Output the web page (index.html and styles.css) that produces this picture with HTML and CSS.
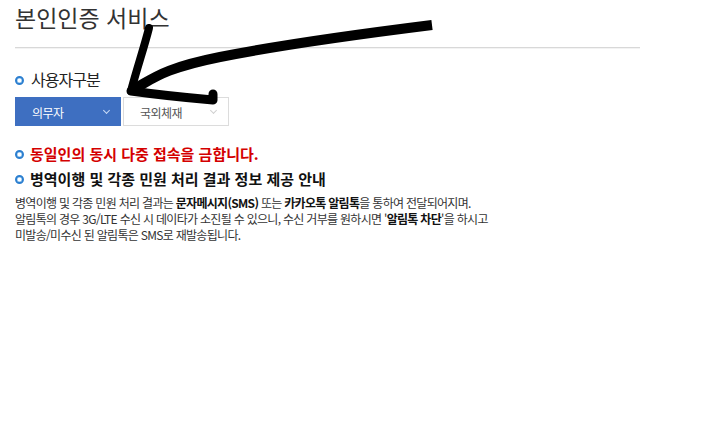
FILE: index.html
```html
<!DOCTYPE html>
<html lang="ko">
<head>
<meta charset="utf-8">
<title>본인인증 서비스</title>
<link rel="stylesheet" href="styles.css">
</head>
<body>
<div class="page">
  <h1 class="title">본인인증 서비스</h1>
  <div class="rule"></div>

  <h2 class="sec sec-user"><span class="dot"></span>사용자구분</h2>
  <div class="selects">
    <div class="sel sel-blue"><span class="sel-text">의무자</span><span class="chev chev-light"></span></div>
    <div class="sel sel-white"><span class="sel-text">국외체재</span><span class="chev chev-gray"></span></div>
  </div>

  <p class="warn"><span class="dot"></span>동일인의 동시 다중 접속을 금합니다.</p>
  <h2 class="sec sec-info"><span class="dot"></span>병역이행 및 각종 민원 처리 결과 정보 제공 안내</h2>
  <p class="desc">병역이행 및 각종 민원 처리 결과는 <b>문자메시지(SMS)</b> 또는 <b>카카오톡 알림톡</b>을 통하여 전달되어지며.<br>알림톡의 경우 3G/LTE 수신 시 데이타가 소진될 수 있으니, 수신 거부를 원하시면 '<b>알림톡 차단</b>'을 하시고<br>미발송/미수신 된 알림톡은 SMS로 재발송됩니다.</p>

  <svg class="scribble" width="727" height="445" viewBox="0 0 727 445" aria-hidden="true">
    <path d="M432,25 C360,34 280,45 220,57 S152,80 132,90" fill="none" stroke="#000" stroke-width="10" stroke-linecap="butt" stroke-linejoin="round"/>
    <path d="M149,28 C144,48 137,68 131,91" fill="none" stroke="#000" stroke-width="8" stroke-linecap="round"/>
    <path d="M131,91 C160,95 190,98 213,100 L213,94" fill="none" stroke="#000" stroke-width="9" stroke-linecap="round" stroke-linejoin="round"/>
  </svg>
</div>
</body>
</html>
```

FILE: styles.css
```css
html, body {
  margin: 0;
  padding: 0;
  background: #fff;
}

body {
  font-family: "Noto Sans CJK KR", "Noto Sans", sans-serif;
  color: #333;
}

.page {
  position: relative;
  width: 727px;
  height: 445px;
  padding-left: 15px;
  box-sizing: border-box;
}

.title {
  margin: 0;
  padding-top: 4px;
  font-size: 23px;
  line-height: 27px;
  font-weight: 400;
  letter-spacing: 0;
  color: #333;
}

.rule {
  width: 625px;
  margin-top: 16px;
  border-top: 1px solid #d8d8d8;
  border-bottom: 1px solid #f3f3f3;
}

.dot {
  display: inline-block;
  width: 9px;
  height: 9px;
  box-sizing: border-box;
  border-radius: 50%;
  border: 2.5px solid #2c7fd0;
  background: #fff;
  box-shadow: inset 0 0 0 0.5px #8cc4f0;
  margin-right: 6px;
  vertical-align: middle;
  position: relative;
  top: -1px;
}

.sec {
  margin: 0;
  font-weight: 400;
  color: #222;
}

.sec-user {
  margin-top: 20px;
  font-size: 16px;
  line-height: 20px;
  letter-spacing: -1px;
}

.sec-user .dot {
  margin-right: 7px;
}

.selects {
  display: flex;
  gap: 2px;
  margin-top: 8px;
}

.sel {
  width: 106px;
  height: 29px;
  box-sizing: border-box;
  display: flex;
  align-items: center;
  justify-content: space-between;
  padding: 1px 12px 0 17px;
  font-size: 12px;
  letter-spacing: -0.5px;
}

.sel-blue {
  background: #3e6fc1;
  color: #fff;
}

.sel-white {
  background: #fff;
  border: 1px solid #dcdcdc;
  color: #555;
  padding-left: 16px;
}

.chev {
  width: 4px;
  height: 4px;
  border-right: 1.5px solid;
  border-bottom: 1.5px solid;
  transform: rotate(45deg);
  margin-top: -3px;
}

.chev-light {
  border-color: #c9dbf5;
}

.chev-gray {
  border-color: #d0d0d0;
}

.warn {
  margin: 18px 0 0;
  font-size: 15px;
  line-height: 20px;
  font-weight: 700;
  letter-spacing: 0;
  color: #d40000;
}

.sec-info {
  margin-top: 5px;
  font-size: 15px;
  line-height: 20px;
  font-weight: 700;
  letter-spacing: 0;
  color: #111;
}

.desc {
  margin: 6px 0 0;
  font-size: 12px;
  line-height: 16px;
  letter-spacing: -0.7px;
  color: #333;
}

.desc b {
  font-weight: 700;
  color: #111;
}

.scribble {
  position: absolute;
  left: 0;
  top: 0;
  pointer-events: none;
}
```
